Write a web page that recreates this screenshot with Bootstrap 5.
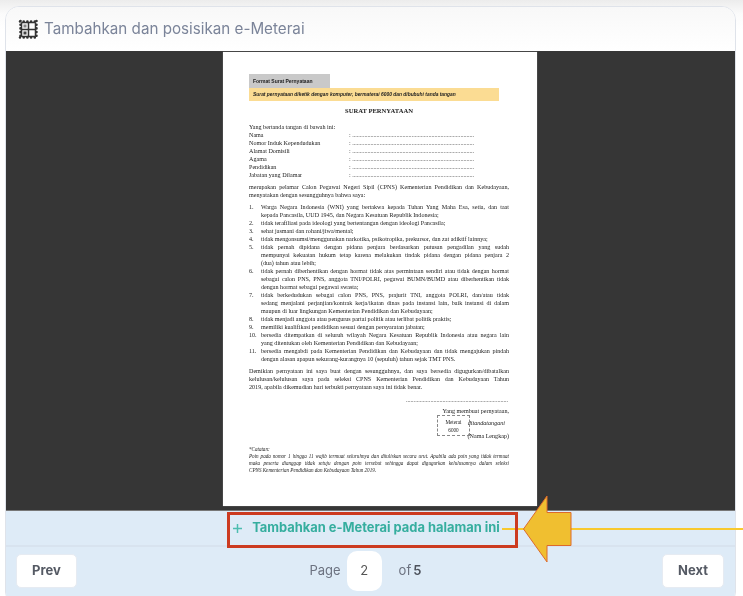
<!DOCTYPE html>
<html lang="id">
<head>
<meta charset="utf-8">
<title>e-Meterai</title>
<link href="https://cdn.jsdelivr.net/npm/bootstrap@5.3.0/dist/css/bootstrap.min.css" rel="stylesheet">
<style>
html,body{height:596px;overflow:hidden}
body{background:linear-gradient(#ececec,#fbfbfb 14px,#fff 30px);font-family:Inter,"Liberation Sans",sans-serif;position:relative}
.shell{margin:6px 7px 0 5px;height:600px;border:1px solid #dfe3ea;border-radius:14px;background:#fff;overflow:hidden;display:flex;flex-direction:column;filter:blur(.3px)}
.head-bar{height:44px;padding:0 11px 0 12px;gap:5px;color:#7b8499;font-size:15.2px;flex:none;background:linear-gradient(#f8f8f8,#fff)}
.viewer{height:460px;background:#363636;flex:none;display:flex;padding-left:217px;border-bottom:1px solid #777}
.sheet{width:314px;height:454px;margin-top:1px;background:#fff;padding:22px 28px 0 26px;font:6.1px/8px "Liberation Serif",serif;color:#222;filter:blur(.4px);flex:none;box-shadow:0 0 1px #999}
.tag-grey{width:81px;height:14px;background:#c9c9c9;font:bold 5px/14px "Liberation Sans",sans-serif;padding-left:4px}
.tag-yellow{width:250px;height:13px;background:#fbdc93;font:italic bold 4.9px/13px "Liberation Sans",sans-serif;padding-left:4px}
.doc-title{font-weight:700;font-size:6.6px;text-align:center;margin:6px 0 8px;line-height:8px}
.form-line{display:flex}
.form-line span:first-child{width:100px}
.form-line span:last-child{flex:1;white-space:nowrap;color:#555}
.jl{text-align:justify;text-align-last:justify;white-space:nowrap}
.item{display:flex}
.item>b{font-weight:400;width:12px;flex:none}
.item>div{flex:1;min-width:0}
.dot-rule{margin-left:157px;white-space:nowrap;color:#555;margin-top:5px}
.sign{margin-left:auto;width:104px;position:relative;height:39px;margin-top:3px}
.stamp{border:1px dashed #888;width:33px;height:21px;position:absolute;left:32px;top:8px;text-align:center;line-height:8px;padding-top:2px;font-size:5.2px}
.sign-mark{padding-right:4px;margin-top:4px;font-style:italic}
.sign-name{margin-top:5px}
.note{font-size:5.1px;line-height:7px;font-style:italic}
.action-row{height:36px;background:#deebf7;color:#36ae9f;font-weight:700;font-size:12.9px;flex:none;gap:9px;border-bottom:2px solid #d8e3ef;padding-right:9px}
.action-row svg{flex:none}
.foot-row{height:50px;flex:none;background:#deebf7;padding:0 11px 2px 10px;color:#6c7280;font-size:13px}
.nav-btn{background:#fff;border:1px solid #e6ebf2;color:#555a64;font-weight:700;font-size:13px;height:34px;padding:0 15px;display:flex;align-items:center;border-radius:5px}
.pager{padding-right:8px}
.page-box{width:35px;height:40px;background:#fff;border-radius:10px;display:flex;align-items:center;justify-content:center;color:#555;margin:0 17px 0 6px}
.pager-total{font-weight:600;color:#4d525c;margin-left:2px}
.callout{position:absolute;left:0;top:0;width:743px;height:596px;pointer-events:none;filter:blur(.25px)}
</style>
</head>
<body>
<div class="shell">
  <div class="head-bar d-flex align-items-center">
    <svg width="21" height="21" viewBox="0 0 21 21" fill="none">
      <g stroke="#333" stroke-width="2.600" stroke-linecap="round" stroke-dasharray="0 3.700">
        <path d="M2 2.500H20M2 18.500H20M2.500 2V20M18.500 2V20"/>
      </g>
      <g stroke="#333" stroke-width="1.500">
        <rect x="3.500" y="3.500" width="14" height="14" rx="1"/>
        <path d="M10.500 3.500v14M3.500 10.500h14"/>
      </g>
      <rect x="5.500" y="12.500" width="3" height="3" fill="#444"/>
      <rect x="5.500" y="5.500" width="3" height="3" fill="#888"/>
    </svg>
    <span>Tambahkan dan posisikan e-Meterai</span>
  </div>
  <div class="viewer">
    <div class="sheet">
      <div class="tag-grey">Format Surat Pernyataan</div>
      <div class="tag-yellow">Surat pernyataan diketik dengan komputer, bermaterai 6000 dan dibubuhi tanda tangan</div>
      <div class="doc-title">SURAT PERNYATAAN</div>
      <div>Yang bertanda tangan di bawah ini:</div>
      <div class="form-line"><span>Nama</span><span>: ................................................................................</span></div>
      <div class="form-line"><span>Nomor Induk Kependudukan</span><span>: ................................................................................</span></div>
      <div class="form-line"><span>Alamat Domisili</span><span>: ................................................................................</span></div>
      <div class="form-line"><span>Agama</span><span>: ................................................................................</span></div>
      <div class="form-line"><span>Pendidikan</span><span>: ................................................................................</span></div>
      <div class="form-line"><span>Jabatan yang Dilamar</span><span>: ................................................................................</span></div>
      <div class="mt-1 jl">merupakan pelamar Calon Pegawai Negeri Sipil (CPNS) Kementerian Pendidikan dan Kebudayaan,</div>
      <div class="mb-1">menyatakan dengan sesungguhnya bahwa saya:</div>
      <div class="item"><b>1.</b><div><div class="jl">Warga Negara Indonesia (WNI) yang bertakwa kepada Tuhan Yang Maha Esa, setia, dan taat</div><div>kepada Pancasila, UUD 1945, dan Negara Kesatuan Republik Indonesia;</div></div></div>
      <div class="item"><b>2.</b><div>tidak terafiliasi pada ideologi yang bertentangan dengan ideologi Pancasila;</div></div>
      <div class="item"><b>3.</b><div>sehat jasmani dan rohani/jiwa/mental;</div></div>
      <div class="item"><b>4.</b><div>tidak mengonsumsi/menggunakan narkotika, psikotropika, prekursor, dan zat adiktif lainnya;</div></div>
      <div class="item"><b>5.</b><div><div class="jl">tidak pernah dipidana dengan pidana penjara berdasarkan putusan pengadilan yang sudah</div><div class="jl">mempunyai kekuatan hukum tetap karena melakukan tindak pidana dengan pidana penjara 2</div><div>(dua) tahun atau lebih;</div></div></div>
      <div class="item"><b>6.</b><div><div class="jl">tidak pernah diberhentikan dengan hormat tidak atas permintaan sendiri atau tidak dengan hormat</div><div class="jl">sebagai calon PNS, PNS, anggota TNI/POLRI, pegawai BUMN/BUMD atau diberhentikan tidak</div><div>dengan hormat sebagai pegawai swasta;</div></div></div>
      <div class="item"><b>7.</b><div><div class="jl">tidak berkedudukan sebagai calon PNS, PNS, prajurit TNI, anggota POLRI, dan/atau tidak</div><div class="jl">sedang menjalani perjanjian/kontrak kerja/ikatan dinas pada instansi lain, baik instansi di dalam</div><div>maupun di luar lingkungan Kementerian Pendidikan dan Kebudayaan;</div></div></div>
      <div class="item"><b>8.</b><div>tidak menjadi anggota atau pengurus partai politik atau terlibat politik praktis;</div></div>
      <div class="item"><b>9.</b><div>memiliki kualifikasi pendidikan sesuai dengan persyaratan jabatan;</div></div>
      <div class="item"><b>10.</b><div><div class="jl">bersedia ditempatkan di seluruh wilayah Negara Kesatuan Republik Indonesia atau negara lain</div><div>yang ditentukan oleh Kementerian Pendidikan dan Kebudayaan;</div></div></div>
      <div class="item"><b>11.</b><div><div class="jl">bersedia mengabdi pada Kementerian Pendidikan dan Kebudayaan dan tidak mengajukan pindah</div><div>dengan alasan apapun sekurang-kurangnya 10 (sepuluh) tahun sejak TMT PNS.</div></div></div>
      <div class="jl mt-1">Demikian pernyataan ini saya buat dengan sesungguhnya, dan saya bersedia digugurkan/dibatalkan</div>
      <div class="jl">kelulusan/kelulusan saya pada seleksi CPNS Kementerian Pendidikan dan Kebudayaan Tahun</div>
      <div>2019, apabila dikemudian hari terbukti pernyataan saya ini tidak benar.</div>
      <div class="dot-rule">...................................................................</div>
      <div class="sign">
        <div class="text-end">Yang membuat pernyataan,</div>
        <div class="stamp">Meterai<br>6000</div>
        <div class="text-end sign-mark">ditandatangani</div>
        <div class="text-end sign-name">(Nama Lengkap)</div>
      </div>
      <div class="note">*Catatan:</div>
      <div class="note jl">Poin pada nomor 1 hingga 11 wajib termuat seluruhnya dan dituliskan secara urut. Apabila ada poin yang tidak termuat</div>
      <div class="note jl">maka peserta dianggap tidak setuju dengan poin tersebut sehingga dapat digugurkan kelulusannya dalam seleksi</div>
      <div class="note">CPNS Kementerian Pendidikan dan Kebudayaan Tahun 2019.</div>
    </div>
  </div>
  <div class="action-row d-flex align-items-center justify-content-center">
    <svg width="11" height="11" viewBox="0 0 11 11" stroke="#4dbdb0" stroke-width="1.500"><path d="M5.500 1v9M1 5.500h9"/></svg>
    <span>Tambahkan e-Meterai pada halaman ini</span>
  </div>
  <div class="foot-row d-flex align-items-center">
    <button class="nav-btn" type="button">Prev</button>
    <div class="pager d-flex align-items-center mx-auto">
      <span>Page</span>
      <div class="page-box">2</div>
      <span>of</span>
      <span class="pager-total">5</span>
    </div>
    <button class="nav-btn" type="button">Next</button>
  </div>
</div>
<svg class="callout" viewBox="0 0 743 596">
  <line x1="502" y1="529" x2="743" y2="529" stroke="#f8c92e" stroke-width="2"/>
  <rect x="228.500" y="513.500" width="288" height="33" fill="none" stroke="#cc3b20" stroke-width="3"/>
  <path d="M523.500 529 547 496V512.500H571V545.500H547V562Z" fill="#f0bf30" stroke="#dc6a2c" stroke-width="1"/>
</svg>
<script src="https://cdn.jsdelivr.net/npm/bootstrap@5.3.0/dist/js/bootstrap.bundle.min.js"></script>
</body>
</html>
